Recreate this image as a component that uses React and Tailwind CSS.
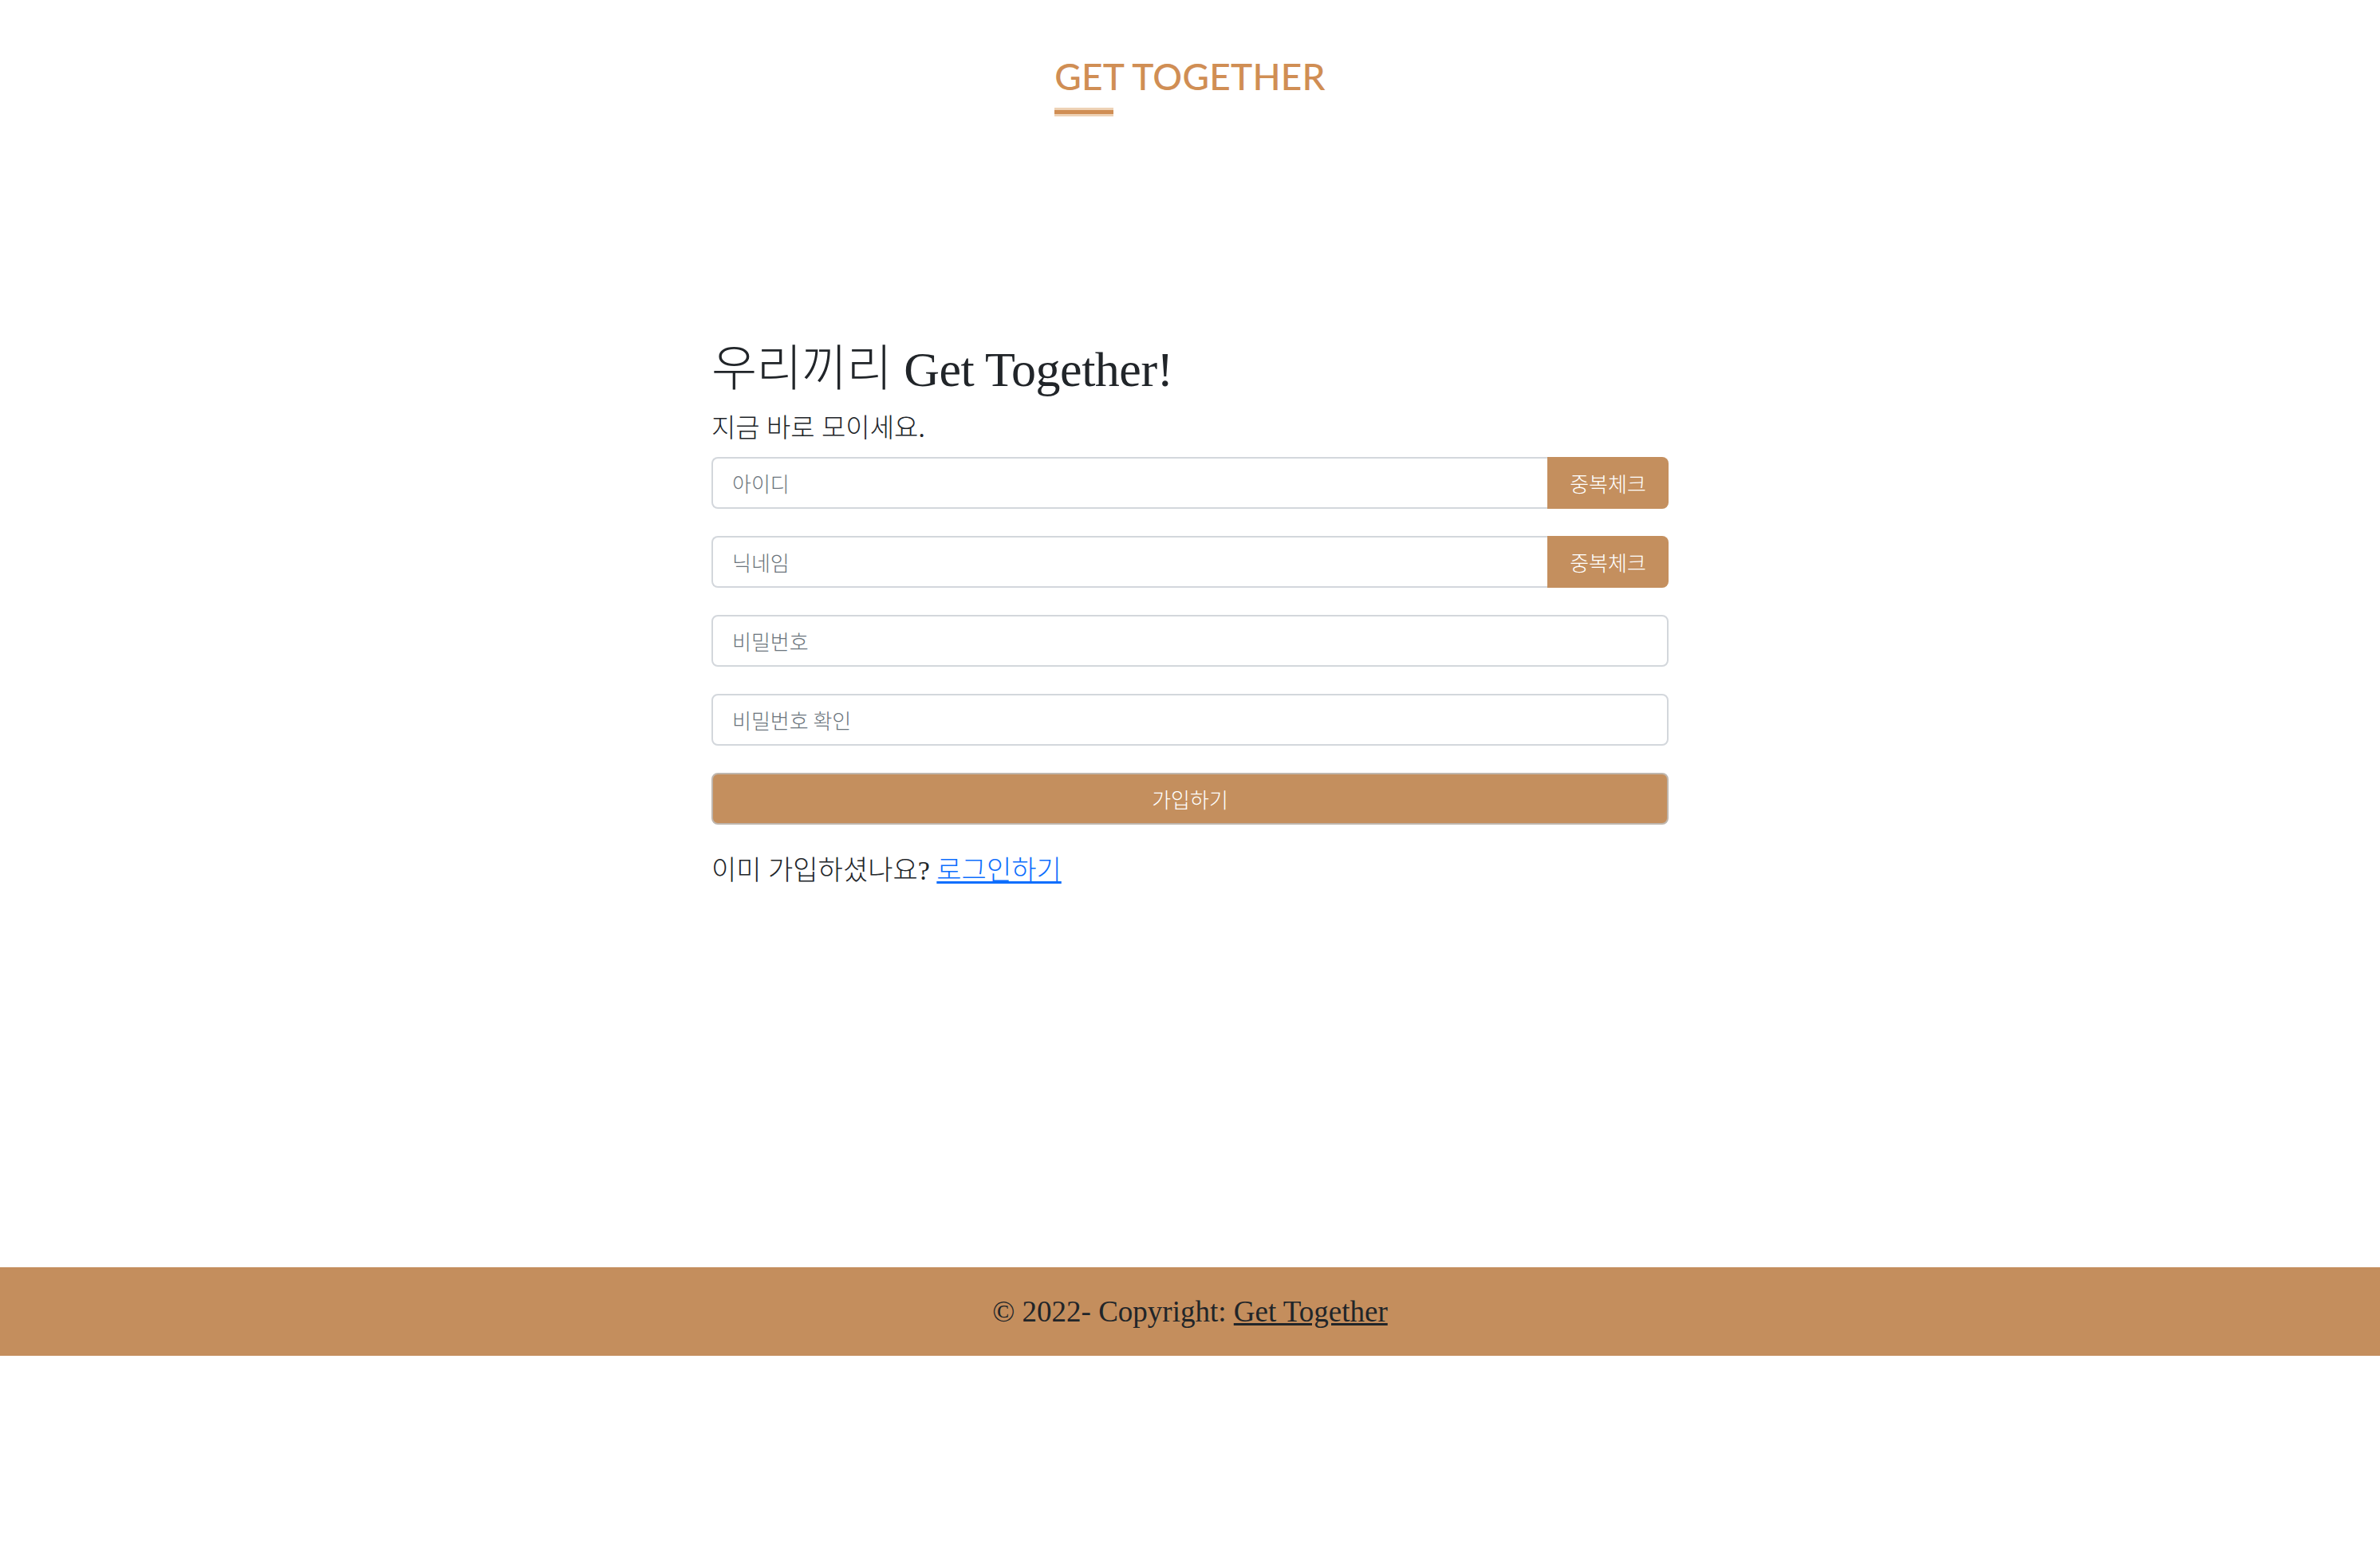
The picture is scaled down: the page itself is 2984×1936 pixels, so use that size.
import React from "react";

const serif = "font-['Liberation_Serif','Noto_Sans_CJK_KR',serif]";
const kr = "font-['Noto_Sans_CJK_KR','Noto_Sans',sans-serif]";

const Field = ({ placeholder, type = "text", check }) => (
  <div className="flex h-[65px] w-full">
    <input
      type={type}
      placeholder={placeholder}
      className={`flex-1 min-w-0 h-full border-2 border-[#d3d7dc] bg-white px-[24px] text-[26px] font-light text-[#212529] placeholder:text-[#6c757d] outline-none ${kr} ${
        check ? "rounded-l-[8px] border-r-0" : "rounded-[8px]"
      }`}
    />
    {check && (
      <button
        className={`w-[152px] h-full rounded-r-[8px] bg-[#c48f5e] text-[26px] font-light text-white ${kr}`}
      >
        중복체크
      </button>
    )}
  </div>
);

export default function App() {
  return (
    <div className="w-full bg-white text-[#212529]">
      <div className="h-[1589px] flex flex-col">
        {/* header */}
        <header className="flex justify-center pt-[73px]">
          <div className="flex flex-col items-start">
            <span className="font-['Lato','Inter',sans-serif] font-medium text-[46px] leading-none tracking-[0.2px] text-[#d08e54]">
              GET TOGETHER
            </span>
            <div className="mt-[16px] w-[74px] h-[11px] border-y-[3px] border-[#eed2b6] bg-[#d08e54]" />
          </div>
        </header>

        {/* signup form */}
        <main className="w-[1200px] mx-auto mt-[280px]">
          <h1 className={`${serif} text-[62px] leading-[1.2] font-normal tracking-[-0.5px]`}>
            <span className="font-light">우리끼리</span> Get Together!
          </h1>
          <p className={`${serif} mt-[14px] text-[33px] leading-[1.45] font-light`}>
            지금 바로 모이세요.
          </p>

          <form className="mt-[11px] flex flex-col gap-[34px]" onSubmit={(e) => e.preventDefault()}>
            <Field placeholder="아이디" check />
            <Field placeholder="닉네임" check />
            <Field placeholder="비밀번호" type="password" />
            <Field placeholder="비밀번호 확인" type="password" />
            <button
              type="submit"
              className={`h-[65px] w-full rounded-[8px] border-2 border-[#bfb6ad] bg-[#c48f5e] text-[26px] font-light text-white ${kr}`}
            >
              가입하기
            </button>
          </form>

          <p className={`${serif} mt-[32px] text-[34px] leading-[1.5] font-light`}>
            이미 가입하셨나요?{" "}
            <a href="#" className="text-[#0d6efd] underline">
              로그인하기
            </a>
          </p>
        </main>
      </div>

      {/* footer */}
      <footer className="h-[111px] bg-[#c48e5d] flex items-center justify-center">
        <p className={`${serif} text-[37px] text-[#212529]`}>
          © 2022- Copyright:{" "}
          <a href="#" className="text-[#212529] underline">
            Get Together
          </a>
        </p>
      </footer>
    </div>
  );
}
